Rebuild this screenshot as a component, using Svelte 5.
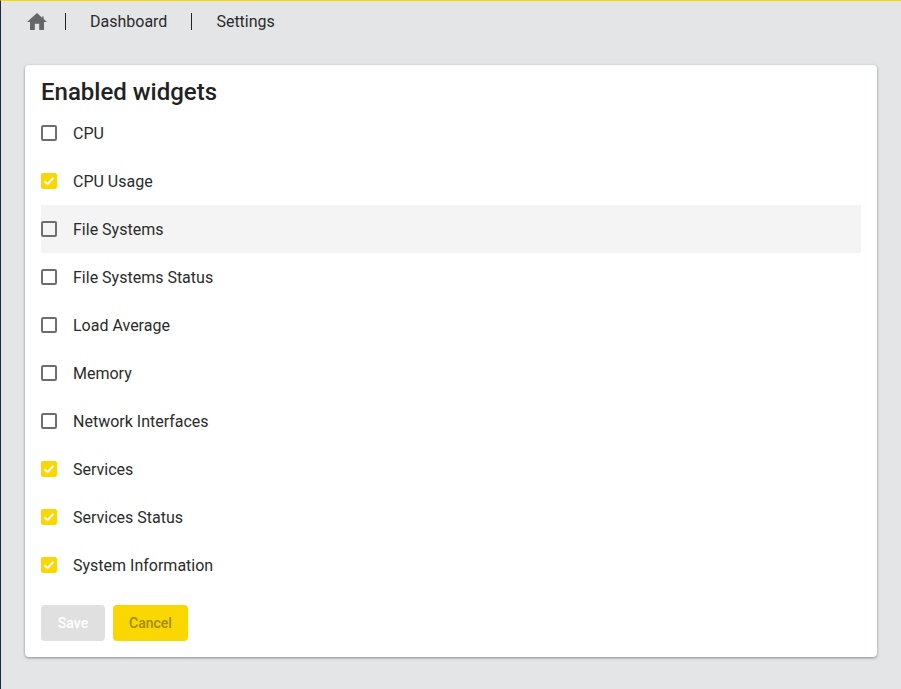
<script>
	// hovered row is File Systems in the reference
	const hovered = 'File Systems';

	let widgets = $state([
		{ name: 'CPU', on: false },
		{ name: 'CPU Usage', on: true },
		{ name: 'File Systems', on: false },
		{ name: 'File Systems Status', on: false },
		{ name: 'Load Average', on: false },
		{ name: 'Memory', on: false },
		{ name: 'Network Interfaces', on: false },
		{ name: 'Services', on: true },
		{ name: 'Services Status', on: true },
		{ name: 'System Information', on: true }
	]);
</script>

<div class="shell">
	<nav class="topbar">
		<a class="home" href="#home" aria-label="Home">
			<svg viewBox="0 0 24 24" width="24" height="24"><path d="M9.8 20v-6.2h4.4V20H19v-8h3l-3.4-3V6.4h-1.5v1.3L12 3 2 12h3v8z" fill="#666" /></svg>
		</a>
		<a class="link" href="#dashboard">Dashboard</a>
		<a class="link" href="#settings">Settings</a>
	</nav>

	<main class="card">
		<h1>Enabled widgets</h1>
		<ul>
			{#each widgets as w (w.name)}
				<li class:hover={w.name === hovered}>
					<label>
						<input type="checkbox" bind:checked={w.on} />
						<span class="box" class:on={w.on}>
							{#if w.on}
								<svg viewBox="0 0 16 16" width="16" height="16"><path d="M3.5 8.3l3 2.8 6-6.4" fill="none" stroke="#fff" stroke-width="2" /></svg>
							{/if}
						</span>
						<span class="name">{w.name}</span>
					</label>
				</li>
			{/each}
		</ul>
		<div class="actions">
			<button class="save" disabled>Save</button>
			<button class="cancel">Cancel</button>
		</div>
	</main>
</div>

<style>
	:global(body) {
		margin: 0;
		background: #e4e5e7;
		font-family: Roboto, "Liberation Sans", sans-serif;
	}
	.shell {
		height: 689px;
		box-sizing: border-box;
		border-top: 1px solid #fad700;
		border-left: 1px solid #1f2d3a;
		padding: 0 24px;
		overflow: hidden;
	}
	.topbar {
		display: flex;
		align-items: center;
		height: 40px;
	}
	.home {
		display: flex;
		width: 40px;
		padding-top: 2px;
	}
	.link {
		color: #2b2b2b;
		text-decoration: none;
		font-size: 16px;
		line-height: 17px;
		padding: 0 24px;
		border-left: 1px solid #222;
	}
	.card {
		margin-top: 24px;
		background: #fff;
		border-radius: 4px;
		box-shadow: 0 1px 3px rgba(0, 0, 0, 0.4);
		padding: 16px;
		height: 592px;
		box-sizing: border-box;
	}
	h1 {
		margin: 0;
		font-size: 24px;
		font-weight: 500;
		line-height: 22px;
		color: #222;
	}
	ul {
		list-style: none;
		margin: 0;
		padding: 0;
		margin-top: 6px;
	}
	li {
		height: 48px;
	}
	li.hover {
		background: #f4f4f4;
	}
	label {
		display: flex;
		align-items: center;
		height: 100%;
		cursor: pointer;
	}
	input {
		display: none;
	}
	.box {
		width: 16px;
		height: 16px;
		box-sizing: border-box;
		border: 2px solid #6e6e6e;
		border-radius: 2px;
		display: flex;
		align-items: center;
		justify-content: center;
		margin-right: 16px;
	}
	.box.on {
		background: #fad700;
		border: none;
	}
	.name {
		font-size: 16px;
		color: #2b2b2b;
	}
	.actions {
		display: flex;
		gap: 8px;
		margin-top: 16px;
	}
	button {
		height: 36px;
		border: none;
		border-radius: 4px;
		font: 500 14px Roboto, "Liberation Sans", sans-serif;
	}
	.save {
		width: 64px;
		background: #e0e0e0;
		color: #fff;
	}
	.cancel {
		width: 75px;
		background: #fad700;
		color: #a08a00;
	}
</style>
